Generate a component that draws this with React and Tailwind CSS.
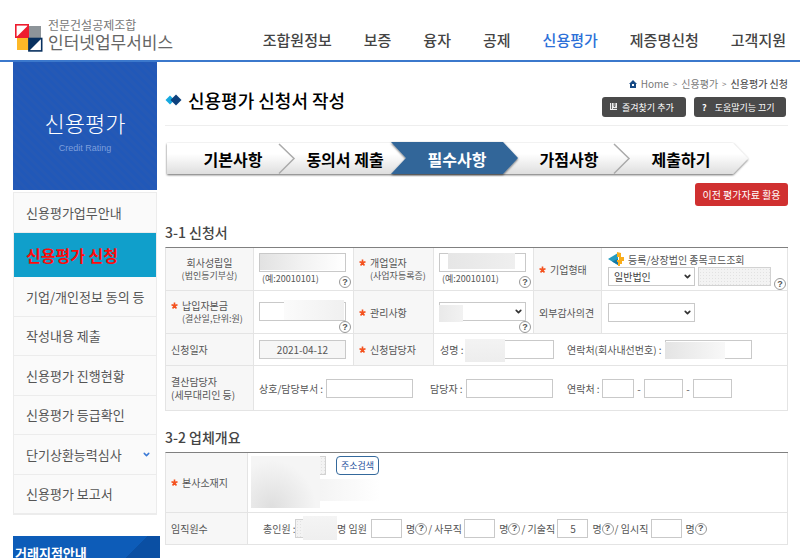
import { ChevronDown } from "lucide-react";

const NAV = ["조합원정보", "보증", "융자", "공제", "신용평가", "제증명신청", "고객지원"];

const MENU = [
  "신용평가업무안내",
  "신용평가 신청",
  "기업/개인정보 동의 등",
  "작성내용 제출",
  "신용평가 진행현황",
  "신용평가 등급확인",
  "단기상환능력심사",
  "신용평가 보고서",
];

const STEPS = ["기본사항", "동의서 제출", "필수사항", "가점사항", "제출하기"];

const box = "h-[19px] border border-[#c9c9c9] bg-white text-center text-[10px] text-[#555] outline-none";
const dotted =
  "h-[19px] border border-[#d2d2d2] bg-[#f3f3f3] bg-[radial-gradient(#e2e2e2_1px,transparent_1px)] bg-[size:3px_3px] outline-none";


function Logo() {
  return (
    <svg width="28" height="28" viewBox="0 0 28 28" aria-hidden="true">
      <rect x="14" y="2" width="12" height="12" fill="#8d9499" />
      <rect x="2" y="14" width="12" height="12" fill="#fdb827" />
      <rect x="0.8" y="0.8" width="12.4" height="12.4" fill="#fff" stroke="#ee1c2e" strokeWidth="1.6" />
      <path d="M13.5 1v12.5H1z" fill="#ee1c2e" />
      <rect x="14" y="14.5" width="12.7" height="12.4" fill="#fff" stroke="#08305f" strokeWidth="1.6" />
      <path d="M27 14H13.5v13.5z" fill="#08305f" />
    </svg>
  );
}

function Star() {
  return (
    <svg className="shrink-0" width="7" height="7" viewBox="0 0 7 7" aria-hidden="true">
      <path
        d="M3.5 3.7V.4M3.5 3.7L.5 2.7M3.5 3.7l3-1M3.5 3.7L1.6 6.5M3.5 3.7l1.9 2.8"
        stroke="#f4511e"
        strokeWidth="1.6"
      />
    </svg>
  );
}

function Help() {
  return (
    <button
      type="button"
      aria-label="도움말"
      className="flex h-3 w-3 shrink-0 items-center justify-center rounded-full border border-[#999] bg-white font-['Liberation_Sans',sans-serif] text-[9px] leading-none font-bold text-[#555]"
    >
      ?
    </button>
  );
}

function Dropdown({ id, label, value }) {
  return (
    <div className="relative h-[19px] w-[87px]">
      <select
        id={id}
        aria-label={label}
        className="h-[19px] w-full appearance-none border border-[#c9c9c9] bg-white pl-[5px] text-[10px] leading-[17px] text-[#444]"
      >
        <option>{value}</option>
      </select>
      <ChevronDown className="pointer-events-none absolute top-[5px] right-[3px] text-[#333]" size={9} strokeWidth={4.5} />
    </div>
  );
}

function Th({ children, className = "" }) {
  return (
    <th className={`border-r border-b border-[#e4e4e4] bg-[#f7f7f7] px-[5px] text-left font-normal ${className}`}>
      {children}
    </th>
  );
}

function Td({ children, className = "", colSpan }) {
  return (
    <td colSpan={colSpan} className={`border-r border-b border-[#e4e4e4] pl-[5px] ${className}`}>
      {children}
    </td>
  );
}

function StepBar() {
  return (
    <ol className="relative mt-4 grid h-[34px] w-[584px] max-w-full grid-cols-5 items-center px-3 text-center text-[16px] leading-[20px] font-bold text-black">
      <svg
        className="absolute inset-0 h-full w-full overflow-visible"
        viewBox="0 0 584 34"
        preserveAspectRatio="none"
        aria-hidden="true"
      >
        <defs>
          <linearGradient id="stepFill" x1="0" y1="0" x2="0" y2="1">
            <stop offset="0.35" stopColor="#fff" />
            <stop offset="1" stopColor="#dedede" />
          </linearGradient>
          <filter id="stepShadow" x="-5%" y="-20%" width="110%" height="150%">
            <feDropShadow dx="0" dy="1" stdDeviation="1" floodColor="#000" floodOpacity="0.6" />
          </filter>
        </defs>
        <path d="M2 1h566l15 15.500-15 15.500H2z" fill="url(#stepFill)" filter="url(#stepShadow)" />
        <g fill="none" stroke="#aaa" strokeWidth="1.500">
          <path d="M114 2l15 14.500-15 15" />
          <path d="M449 2l15 14.500-15 15" />
        </g>
        <path d="M226 0h112l15 16-15 16H226l15-16z" fill="#336699" filter="url(#stepShadow)" />
      </svg>
      {STEPS.map((step, i) => (
        <li key={step} className={i === 2 ? "relative text-white" : "relative"}>
          {step}
        </li>
      ))}
    </ol>
  );
}

function Sidebar() {
  return (
    <aside className="w-[147px] shrink-0">
      <div className="mr-[3px] flex h-32 flex-col items-center bg-[#2158b8] bg-[repeating-linear-gradient(45deg,#2158b8_0_3px,#2559b5_3px_6px)] pt-[45px] text-white">
        <strong className="text-[22px] leading-[30px] font-light">신용평가</strong>
        <span className="mt-1 font-['Liberation_Sans_Narrow','Liberation_Sans',sans-serif] text-[9px] leading-[14px] text-[#7d9fdc]">
          Credit Rating
        </span>
      </div>

      <ul className="mt-[2px] mr-[3px] border border-[#ececec] bg-[#fafafa] text-[13px] text-[#555]">
        {MENU.map((item, i) => (
          <li key={item} className={i % 2 ? "h-[39px] has-[.active]:h-11" : "h-10"}>
            <a
              href="#menu"
              className={
                i === 1
                  ? "active flex h-full items-center bg-[#109fcb] px-3 text-[16px] font-bold text-[#ff0a0a]"
                  : "flex h-full items-center justify-between border-b border-[#ececec] pr-[5px] pl-3 whitespace-nowrap"
              }
            >
              {item}
              {i === 6 && <ChevronDown size={9} strokeWidth={4} className="text-[#3b7ad6]" />}
            </a>
          </li>
        ))}
      </ul>

      <a
        href="#branches"
        className="mt-[21px] block h-[70px] bg-[linear-gradient(135deg,#0d5cb8_0_62%,#0a4fa3_62%)] pt-2 pl-[2px] text-[13px] leading-[18px] font-bold text-white"
      >
        거래지점안내
      </a>
    </aside>
  );
}

function ApplicationTable() {
  return (
    <table className="w-full table-fixed border-separate border-spacing-0 border-t border-l border-t-[#808080] border-l-[#e4e4e4] text-[10px] leading-[13px] text-[#555]">
      <colgroup>
        <col className="w-[88px]" />
        <col className="w-[100px]" />
        <col className="w-[80px]" />
        <col className="w-[100px]" />
        <col className="w-[68px]" />
        <col />
      </colgroup>
      <tbody>
        <tr className="h-[43px]">
          <Th>
            <label htmlFor="founded" className="block text-center">
              회사성립일
              <span className="block text-[9px]">(법인등기부상)</span>
            </label>
          </Th>
          <Td className="pt-[5px] pr-[2px] align-top">
            <div className="relative w-[87px]">
              <input id="founded" className={`block w-full ${box}`} />
              <span className="absolute inset-x-px top-px h-4 bg-linear-to-r from-[#e2e2e2] via-[#f2f2f2] to-white" />
            </div>
            <div className="flex justify-between">
              <span className="pl-[3px] text-[9px] leading-[14px]">(예:20010101)</span>
              <span className="pt-1"><Help /></span>
            </div>
          </Td>
          <Th>
            <label htmlFor="opened" className="flex gap-1">
              <span className="pt-[3px]"><Star /></span>
              <span className="whitespace-nowrap">
                개업일자
                <span className="block text-[9px]">(사업자등록증)</span>
              </span>
            </label>
          </Th>
          <Td className="pt-[5px] pr-[2px] align-top">
            <div className="relative w-[87px]">
              <input id="opened" className={`block w-full ${box}`} />
              <span className="absolute top-0 left-[9px] h-4 w-[67px] bg-linear-to-r from-[#e6e6e6] to-[#efefef]" />
            </div>
            <div className="flex justify-between">
              <span className="pl-[3px] text-[9px] leading-[14px]">(예:20010101)</span>
              <span className="pt-1"><Help /></span>
            </div>
          </Td>
          <Th>
            <label htmlFor="type" className="flex items-center gap-1 whitespace-nowrap">
              <Star />
              기업형태
            </label>
          </Th>
          <Td className="pr-px pl-[6px]">
            <a href="#code" className="flex h-[14px] items-center gap-[3px] whitespace-nowrap">
              <svg width="17" height="14" viewBox="0 0 17 14" aria-hidden="true">
                <path d="M0 7L10 1v12z" fill="#259cc0" />
                <path d="M4 9.500l6-2.500v6z" fill="#1579a5" />
                <path d="M9 0l4 1v4h3v4h-2v3h-2v2h-2v-4H9V8h2V5H9z" fill="#f9ad1a" />
              </svg>
              등록/상장법인 종목코드조회
            </a>
            <div className="mt-px flex items-end gap-[3px]">
              <Dropdown id="type" value="일반법인" />
              <input aria-label="종목코드" disabled className={`w-[73px] ${dotted}`} />
              <span className="ml-auto -mb-1"><Help /></span>
            </div>
          </Td>
        </tr>

        <tr className="h-[43px]">
          <Th>
            <label htmlFor="capital" className="flex gap-1">
              <span className="pt-[3px]"><Star /></span>
              <span className="whitespace-nowrap">
                납입자본금
                <span className="block text-[9px]">(결산일,단위:원)</span>
              </span>
            </label>
          </Th>
          <Td className="pt-[11px] pr-[2px] align-top">
            <div className="relative w-[87px]">
              <input id="capital" className={`block w-full ${box}`} />
              <span className="absolute -top-[2px] right-[2px] h-5 w-[60px] bg-linear-to-r from-[#fbfbfb] to-[#f0f0f0]" />
            </div>
            <div className="flex justify-end"><Help /></div>
          </Td>
          <Th>
            <label htmlFor="manage" className="flex items-center gap-1">
              <Star />
              관리사항
            </label>
          </Th>
          <Td className="pt-[11px] pr-[2px] align-top">
            <div className="relative w-[87px]">
              <Dropdown id="manage" value="" />
              <span className="absolute top-[3px] left-0 h-[17px] w-6 bg-linear-to-r from-[#e9e9e9] to-[#f2f2f2]" />
            </div>
            <div className="flex justify-end"><Help /></div>
          </Td>
          <Th className="whitespace-nowrap">
            <label htmlFor="audit">외부감사의견</label>
          </Th>
          <Td className="pl-[6px]">
            <Dropdown id="audit" value="" />
          </Td>
        </tr>

        <tr className="h-8">
          <Th>
            <label htmlFor="applied">신청일자</label>
          </Th>
          <Td>
            <input
              id="applied"
              readOnly
              defaultValue="2021-04-12"
              className="block h-[19px] w-[87px] border border-[#c9c9c9] bg-[#f6f6f6] text-center text-[10px] outline-none"
            />
          </Td>
          <Th>
            <label htmlFor="applicant" className="flex items-center gap-1 whitespace-nowrap">
              <Star />
              신청담당자
            </label>
          </Th>
          <Td colSpan={3}>
            <div className="flex items-center whitespace-nowrap">
              <label htmlFor="applicant" className="w-[28px] pl-px">성명 :</label>
              <div className="relative mr-[13px] w-[87px]">
                <input id="applicant" className={`block w-full ${box}`} />
                <span className="absolute -top-px -left-[2px] h-[23px] w-10 bg-linear-to-b from-[#f3f3f3] to-[#ededed]" />
              </div>
              <label htmlFor="phone" className="w-[98px]">연락처(회사내선번호) :</label>
              <div className="relative w-[87px]">
                <input id="phone" className={`block w-full ${box}`} />
                <span className="absolute top-[2px] left-0 h-[17px] w-[60px] bg-linear-to-r from-[#e4e4e4] to-[#f8f8f8]" />
              </div>
            </div>
          </Td>
        </tr>

        <tr className="h-[45px]">
          <Th>
            <span className="block">결산담당자</span>
            <span className="block whitespace-nowrap">(세무대리인 등)</span>
          </Th>
          <Td colSpan={5}>
            <div className="flex items-center whitespace-nowrap">
              <label htmlFor="dept" className="w-[67px]">상호/담당부서 :</label>
              <input id="dept" className={`mr-[17px] w-[87px] ${box}`} />
              <label htmlFor="manager" className="w-9">담당자 :</label>
              <input id="manager" className={`mr-[14px] w-[87px] ${box}`} />
              <label htmlFor="tel1" className="w-[35px]">연락처 :</label>
              <input id="tel1" className={`w-8 ${box}`} />
              <span className="w-[10px] text-center">-</span>
              <input aria-label="연락처 국번" className={`w-[39px] ${box}`} />
              <span className="w-[10px] text-center">-</span>
              <input aria-label="연락처 번호" className={`w-[39px] ${box}`} />
            </div>
          </Td>
        </tr>
      </tbody>
    </table>
  );
}

function CompanyTable() {
  return (
    <table className="w-full table-fixed border-separate border-spacing-0 border-t border-l border-t-[#808080] border-l-[#e4e4e4] text-[10px] leading-[13px] text-[#555]">
      <colgroup>
        <col className="w-[82px]" />
        <col />
      </colgroup>
      <tbody>
        <tr className="h-[60px]">
          <Th>
            <label htmlFor="address" className="flex items-center gap-1">
              <Star />
              본사소재지
            </label>
          </Th>
          <Td className="pt-[3px] align-top">
            <div className="relative flex items-center">
              <input id="address" className={`w-[73px] ${dotted}`} />
              <button
                type="button"
                className="ml-[10px] h-[19px] w-[43px] rounded-[4px] border border-[#34699c] bg-white text-[9px] leading-none whitespace-nowrap text-[#1d4f9c]"
              >
                주소검색
              </button>
              <span className="absolute top-0 -left-[2px] h-[52px] w-[69px] bg-[radial-gradient(ellipse_at_30%_100%,#dedede,#f5f5f5_65%)]" />
              <span className="absolute top-[23px] left-[67px] h-[22px] w-[60px] bg-linear-to-r from-[#f4f4f4] to-white" />
            </div>
          </Td>
        </tr>
        <tr className="h-8">
          <Th>임직원수</Th>
          <Td>
            <div className="flex items-center pl-[9px] whitespace-nowrap">
              <label htmlFor="total" className="w-[33px] pl-px">총인원 :</label>
              <div className="relative mr-[11px] w-[31px]">
                <input id="total" className={`block w-full ${dotted}`} />
                <span className="absolute -top-[3px] left-2 h-6 w-[34px] bg-linear-to-b from-[#f4f4f4] to-[#efefef]" />
              </div>
              <label htmlFor="officers" className="w-[34px]">명 임원</label>
              <input id="officers" className={`mr-1 w-[31px] ${box}`} />
              명<Help />
              <label htmlFor="office" className="w-[37px] pl-px">/ 사무직</label>
              <input id="office" className={`mr-1 w-[31px] ${box}`} />
              명<Help />
              <label htmlFor="tech" className="w-[37px] pl-px">/ 기술직</label>
              <input id="tech" defaultValue="5" className={`mr-1 w-[31px] ${box}`} />
              명<Help />
              <label htmlFor="temp" className="w-[37px] pl-px">/ 임시직</label>
              <input id="temp" className={`mr-1 w-[31px] ${box}`} />
              명<Help />
            </div>
          </Td>
        </tr>
      </tbody>
    </table>
  );
}

export default function App() {
  return (
    <div className="h-screen overflow-hidden bg-white font-['Noto_Sans_CJK_KR',sans-serif] text-[#444]">
      <header className="flex h-[62px] items-start justify-between border-b-2 border-[#3b78cc] pr-[14px] pl-[15px]">
        <a href="#home" className="flex items-start gap-[5px] pt-[19px] whitespace-nowrap text-[#777]">
          <span className="pt-[5px]"><Logo /></span>
          <span>
            <span className="block text-[12px] leading-[12px]">전문건설공제조합</span>
            <span className="block text-[17px] leading-[22px] text-[#666]">인터넷업무서비스</span>
          </span>
        </a>
        <nav className="flex gap-8 pt-[30px] text-[15px] leading-[20px] font-medium whitespace-nowrap">
          {NAV.map((item) => (
            <a key={item} href="#nav" className={item === "신용평가" ? "text-[#2c70d8]" : ""}>
              {item}
            </a>
          ))}
        </nav>
      </header>

      <div className="flex gap-[5px] pr-3 pl-[13px]">
        <Sidebar />

        <main className="min-w-0 flex-1">
          <div className="flex items-start justify-between border-b border-[#eee] pb-2">
            <h1 className="flex items-center gap-[6px] pt-[25px] text-[18px] leading-[26px] font-medium text-black">
              <svg width="17" height="12" viewBox="0 0 17 12" aria-hidden="true">
                <path d="M5 1.500L9.500 6 5 10.500.5 6z" fill="#16a9e0" />
                <path d="M11 .5L16.500 6 11 11.500 5.500 6z" fill="#0d417e" />
              </svg>
              신용평가 신청서 작성
            </h1>
            <div className="flex flex-col items-end pt-4">
              <div className="flex items-center gap-1 text-[10px] leading-[12px] text-[#777]">
                <svg width="8" height="8" viewBox="0 0 8 8" aria-hidden="true">
                  <path d="M4 0l4 4H7v4H1V4H0z" fill="#174a85" />
                  <path d="M3 4h2v2H3z" fill="#fff" />
                </svg>
                <a href="#home">Home</a>
                <span className="text-[8px]">&gt;</span>
                <a href="#credit">신용평가</a>
                <span className="text-[8px]">&gt;</span>
                <span className="font-medium text-[#555]">신용평가 신청</span>
              </div>
              <div className="mt-[7px] mr-[2px] flex gap-2 text-[9px] leading-none text-white">
                <button type="button" className="flex h-5 w-[84px] items-center gap-[5px] rounded-[3px] bg-[#4a4a4a] pl-2">
                  <svg width="7" height="8" viewBox="0 0 7 8" aria-hidden="true">
                    <path d="M0 0h7v7H0z" fill="#eee" />
                    <path d="M1.500 0v6M3 5.500h4M4 0v3.500h1V0" stroke="#4a4a4a" strokeWidth="0.800" fill="none" />
                  </svg>
                  즐겨찾기 추가
                </button>
                <button type="button" className="flex h-5 w-[92px] items-center gap-2 rounded-[3px] bg-[#4a4a4a] pl-2">
                  <b>?</b>
                  도움말기능 끄기
                </button>
              </div>
            </div>
          </div>

          <StepBar />

          <div className="mt-[7px] flex justify-end">
            <button type="button" className="h-[23px] w-[93px] rounded-[3px] bg-[#d03030] text-[10px] leading-none whitespace-nowrap text-white">
              이전 평가자료 활용
            </button>
          </div>

          <h2 className="mt-4 mb-[5px] text-[14px] leading-[20px] font-medium">3-1 신청서</h2>
          <ApplicationTable />

          <h2 className="mt-4 mb-[5px] text-[14px] leading-[20px] font-medium">3-2 업체개요</h2>
          <CompanyTable />
        </main>
      </div>
    </div>
  );
}
